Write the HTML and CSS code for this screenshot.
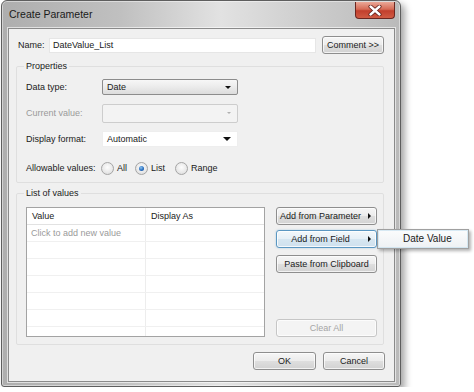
FILE: index.html
```
<!DOCTYPE html>
<html>
<head>
    <link rel="stylesheet" href="styles.css">
</head>
<body>
    <div class="window">
        <div class="titlebar">
            <span class="title">Create Parameter</span>
            <span class="close">
                <svg width="14" height="11" viewBox="0 0 14 11">
                    <path d="M2.5 1.5 L11.5 9.5 M11.5 1.5 L2.5 9.5" stroke="#5a1a14" stroke-width="4" stroke-linecap="round"/>
                    <path d="M2.5 1.5 L11.5 9.5 M11.5 1.5 L2.5 9.5" stroke="#ffffff" stroke-width="2.4" stroke-linecap="round"/>
                </svg>
            </span>
        </div>

        <div class="client">
            <div class="name-row">
                <span class="name-label">Name:</span>
                <div class="textbox">DateValue_List</div>
                <button class="btn comment">Comment &gt;&gt;</button>
            </div>

            <fieldset class="group">
                <legend>Properties</legend>
                <div class="prop-rows">
                    <div class="row">
                        <span class="label">Data type:</span>
                        <div class="combo combo-button">Date<span class="caret"></span></div>
                    </div>
                    <div class="row">
                        <span class="label disabled">Current value:</span>
                        <div class="combo combo-disabled"><span class="caret"></span></div>
                    </div>
                    <div class="row">
                        <span class="label">Display format:</span>
                        <div class="combo combo-white">Automatic<span class="caret big"></span></div>
                    </div>
                    <div class="row row-radio">
                        <span class="label">Allowable values:</span>
                        <div class="radios">
                            <span class="radio"></span><span class="radio-text">All</span>
                            <span class="radio checked"></span><span class="radio-text">List</span>
                            <span class="radio"></span><span class="radio-text">Range</span>
                        </div>
                    </div>
                </div>
            </fieldset>

            <fieldset class="group group-values">
                <legend>List of values</legend>
                <div class="values-body">
                    <div class="grid">
                        <div class="grid-row grid-head">
                            <span class="cell">Value</span>
                            <span class="cell">Display As</span>
                        </div>
                        <div class="grid-row">
                            <span class="cell placeholder">Click to add new value</span>
                            <span class="cell"></span>
                        </div>
                        <div class="grid-row"><span class="cell"></span><span class="cell"></span></div>
                        <div class="grid-row"><span class="cell"></span><span class="cell"></span></div>
                        <div class="grid-row"><span class="cell"></span><span class="cell"></span></div>
                        <div class="grid-row"><span class="cell"></span><span class="cell"></span></div>
                        <div class="grid-row"><span class="cell"></span><span class="cell"></span></div>
                        <div class="grid-row"><span class="cell"></span><span class="cell"></span></div>
                    </div>
                    <div class="side-buttons">
                        <button class="btn has-arrow">Add from Parameter<span class="arrow"></span></button>
                        <div class="menu-anchor">
                            <button class="btn has-arrow hot">Add from Field<span class="arrow"></span></button>
                            <div class="popup">Date Value</div>
                        </div>
                        <button class="btn">Paste from Clipboard</button>
                        <button class="btn btn-disabled clear">Clear All</button>
                    </div>
                </div>
            </fieldset>

            <div class="footer">
                <button class="btn ok">OK</button>
                <button class="btn cancel">Cancel</button>
            </div>
        </div>
    </div>
</body>
</html>
```

FILE: styles.css
```
body {
    margin: 0;
    background-color: #ffffff;
    font-family: 'Liberation Sans', Arial, sans-serif;
    font-size: 9px;
    color: #1a1a1a;
}

.window {
    margin-left: 1px;
    width: 400px;
    height: 387px;
    box-sizing: border-box;
    border: 1px solid #5e5e5e;
    border-radius: 6px 6px 3px 3px;
    padding: 0 5px 4px 6px;
    display: flex;
    flex-direction: column;
    background: linear-gradient(90deg, #aeaeae 0%, #c0c0c0 30%, #e2e2e2 55%, #cfcfcf 75%, #bababa 100%);
    box-shadow: inset 0 0 0 1px rgba(255, 255, 255, 0.45), 4px 4px 7px rgba(0, 0, 0, 0.35);
}

.titlebar {
    height: 27px;
    display: flex;
    align-items: flex-start;
}

.title {
    padding: 7px 0 0 1px;
    font-size: 10.5px;
    color: #1a1a1a;
}

.close {
    margin-left: auto;
    margin-top: 1px;
    width: 40px;
    height: 17px;
    box-sizing: border-box;
    border: 1px solid #6b2620;
    border-top: none;
    border-radius: 0 0 4px 4px;
    background: linear-gradient(#eaa897 0%, #d66b56 45%, #c23f2d 55%, #d05b43 100%);
    display: flex;
    align-items: center;
    justify-content: center;
}

.client {
    height: 354px;
    box-sizing: border-box;
    border: 1px solid #8a8a8a;
    background-color: #f0f0f0;
    padding: 7px 10px 0 7px;
    box-shadow: 0 0 0 1px rgba(255, 255, 255, 0.6);
}

.name-row {
    height: 18px;
    display: flex;
    align-items: center;
}

.name-label {
    margin-left: 2px;
    width: 31px;
}

.textbox {
    width: 267px;
    height: 15px;
    box-sizing: border-box;
    border: 1px solid #e6e6e6;
    background-color: #ffffff;
    padding-left: 3px;
    line-height: 13px;
}

.btn {
    font-family: inherit;
    font-size: 9px;
    color: #1a1a1a;
    height: 18px;
    box-sizing: border-box;
    border: 1px solid #8e8e8e;
    border-radius: 3px;
    padding: 0;
    background: linear-gradient(#f6f6f6 0%, #ececec 48%, #dedede 52%, #d2d2d2 100%);
    box-shadow: inset 0 0 0 1px rgba(255, 255, 255, 0.7);
    position: relative;
}

.comment {
    margin-left: 6px;
    width: 62px;
}

.group {
    margin: 6px 0 0 0;
    padding: 0;
    min-width: 0;
    border: 1px solid #dfdfdf;
    border-radius: 2px;
}

.group legend {
    margin-left: 7px;
    padding: 0 2px;
    line-height: 12px;
}

.group-values {
    margin-top: 4px;
}

.prop-rows {
    display: flex;
    flex-direction: column;
    gap: 6px;
    padding: 5px 0 4px 9px;
}

.row {
    height: 20px;
    display: flex;
    align-items: center;
}

.row-radio {
    margin-top: 3px;
}

.label {
    width: 76px;
}

.label.disabled {
    color: #9a9a9a;
}

.combo {
    width: 136px;
    box-sizing: border-box;
    padding-left: 4px;
    display: flex;
    align-items: center;
    position: relative;
}

.combo-button {
    height: 16px;
    border: 1px solid #8c8c8c;
    border-radius: 2px;
    background: linear-gradient(#f7f7f7 0%, #ebebeb 50%, #dcdcdc 100%);
}

.combo-disabled {
    height: 19px;
    border: 1px solid #cdcdcd;
    border-radius: 2px;
    background-color: #f3f3f3;
}

.combo-white {
    height: 16px;
    border: 1px solid #eeeeee;
    background-color: #ffffff;
}

.caret {
    position: absolute;
    right: 6px;
    top: 50%;
    margin-top: -1px;
    border-left: 3px solid transparent;
    border-right: 3px solid transparent;
    border-top: 3px solid #111111;
}

.combo-disabled .caret {
    border-top-color: #b0b0b0;
    border-left-width: 2px;
    border-right-width: 2px;
    border-top-width: 2px;
}

.caret.big {
    margin-top: -2px;
    border-left-width: 4px;
    border-right-width: 4px;
    border-top-width: 4px;
}

.radios {
    display: flex;
    align-items: center;
    margin-left: -1px;
}

.radio {
    width: 13px;
    height: 13px;
    box-sizing: border-box;
    border-radius: 50%;
    border: 1px solid #a5a5a5;
    background: radial-gradient(circle at 50% 40%, #fdfdfd 0%, #e8e8e8 60%, #d4d4d4 100%);
    position: relative;
}

.radio.checked::after {
    content: '';
    position: absolute;
    left: 3px;
    top: 3px;
    width: 5px;
    height: 5px;
    border-radius: 50%;
    background: radial-gradient(circle at 40% 35%, #8fc6f0 0%, #2a6fc0 55%, #164a8a 100%);
}

.radio-text {
    margin: 0 8px 0 3px;
}

.radio-text:nth-child(4) {
    margin-right: 10px;
}

.values-body {
    display: flex;
    padding: 8px 6px 7px 9px;
}

.grid {
    width: 239px;
    height: 130px;
    box-sizing: border-box;
    border: 1px solid #a3a3a3;
    background-color: #ffffff;
    overflow: hidden;
}

.grid-row {
    height: 17px;
    box-sizing: border-box;
    border-bottom: 1px solid #f0f0f0;
    display: flex;
}

.grid-head {
    border-bottom-color: #e2e2e2;
}

.cell {
    line-height: 16px;
    padding-left: 5px;
}

.cell:first-child {
    width: 119px;
    box-sizing: border-box;
    border-right: 1px solid #ededed;
}

.placeholder {
    color: #9a9a9a;
    padding-left: 4px;
}

.side-buttons {
    margin-left: 11px;
    width: 101px;
    display: flex;
    flex-direction: column;
    gap: 7px;
}

.side-buttons .btn {
    width: 101px;
}

.has-arrow {
    padding-right: 12px;
}

.arrow {
    position: absolute;
    right: 5px;
    top: 50%;
    margin-top: -3px;
    border-top: 3px solid transparent;
    border-bottom: 3px solid transparent;
    border-left: 3px solid #111111;
}

.btn.hot {
    border-color: #5b97c2;
    background: linear-gradient(#f3f8fb 0%, #e6f0f7 48%, #d6e6f1 52%, #cfe1ee 100%);
    box-shadow: inset 0 0 0 1px rgba(255, 255, 255, 0.8), 0 0 2px rgba(90, 160, 210, 0.5);
}

.menu-anchor {
    position: relative;
    margin-top: -2px;
}

.popup {
    position: absolute;
    left: 100%;
    top: -1px;
    width: 92px;
    height: 20px;
    box-sizing: border-box;
    border: 1px solid #a0a0a0;
    background: linear-gradient(#fbfcfd, #eef1f4);
    box-shadow: inset 0 0 0 1px rgba(200, 225, 240, 0.7), 2px 2px 3px rgba(0, 0, 0, 0.3);
    font-size: 10px;
    line-height: 18px;
    padding-left: 25px;
}

.btn-disabled {
    color: #a5a5a5;
    border-color: #c6c6c6;
    background: #f4f4f4;
}

.clear {
    margin-top: auto;
}

.footer {
    margin-top: 7px;
    display: flex;
    justify-content: flex-end;
    gap: 7px;
    margin-right: -1px;
}

.ok {
    width: 63px;
}

.cancel {
    width: 62px;
}
```
